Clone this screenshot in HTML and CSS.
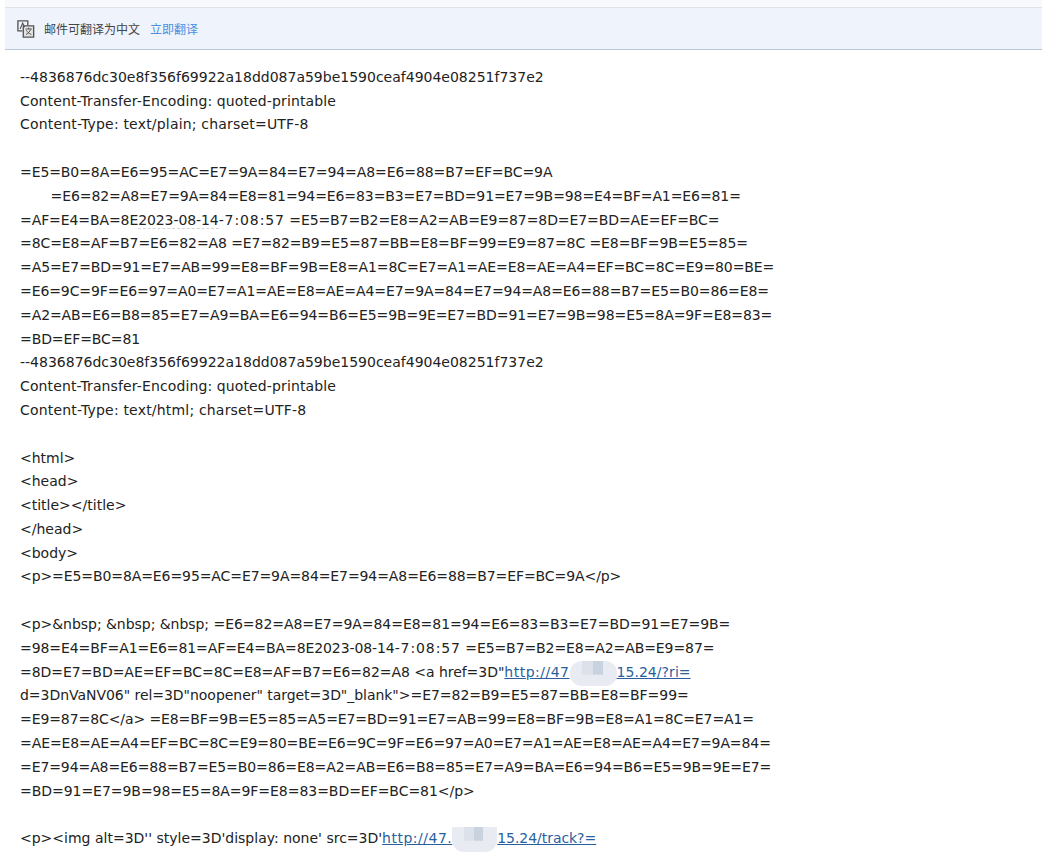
FILE: index.html
```html
<!DOCTYPE html>
<html lang="zh">
<head>
<meta charset="utf-8">
<title>邮件</title>
<link rel="stylesheet" href="styles.css">
</head>
<body>
<div class="topstrip"></div>
<div class="banner">
<svg class="tr-icon" width="18" height="18" viewBox="0 0 20 20" fill="none" stroke="#555" stroke-width="1.5"><path d="M12 6V1H1v11h5"/><path d="M7 6.500h11.500V19H7z" fill="#e4e4e4"/><path d="M3.500 10 6.300 3.500 8.500 8" stroke-width="1.200"/><path d="M9.500 10h7M13 8.500V10M15 10.500c-.7 2.500-2.500 4.500-5 5.500M10.500 11.500c1 2 3 4 5.500 4.500" stroke-width="1.100"/></svg>
<span class="tr-text">邮件可翻译为中文</span>
<span class="tr-link">立即翻译</span>
</div>
<div class="mail">
<div class="ln">--4836876dc30e8f356f69922a18dd087a59be1590ceaf4904e08251f737e2</div>
<div class="ln hdr">Content-Transfer-Encoding: quoted-printable</div>
<div class="ln hdr2">Content-Type: text/plain; charset=UTF-8</div>
<div class="ln">&nbsp;</div>
<div class="ln qp">=E5=B0=8A=E6=95=AC=E7=9A=84=E7=94=A8=E6=88=B7=EF=BC=9A</div>
<div class="ln qp">&nbsp; &nbsp; &nbsp; &nbsp;=E6=82=A8=E7=9A=84=E8=81=94=E6=83=B3=E7=BD=91=E7=9B=98=E4=BF=A1=E6=81=</div>
<div class="ln qp">=AF=E4=BA=8E<span class="date">2023-08-14</span><span class="time">-7:08:57</span> =E5=B7=B2=E8=A2=AB=E9=87=8D=E7=BD=AE=EF=BC=</div>
<div class="ln qp">=8C=E8=AF=B7=E6=82=A8 =E7=82=B9=E5=87=BB=E8=BF=99=E9=87=8C =E8=BF=9B=E5=85=</div>
<div class="ln qp">=A5=E7=BD=91=E7=AB=99=E8=BF=9B=E8=A1=8C=E7=A1=AE=E8=AE=A4=EF=BC=8C=E9=80=BE=</div>
<div class="ln qp">=E6=9C=9F=E6=97=A0=E7=A1=AE=E8=AE=A4=E7=9A=84=E7=94=A8=E6=88=B7=E5=B0=86=E8=</div>
<div class="ln qp">=A2=AB=E6=B8=85=E7=A9=BA=E6=94=B6=E5=9B=9E=E7=BD=91=E7=9B=98=E5=8A=9F=E8=83=</div>
<div class="ln qp">=BD=EF=BC=81</div>
<div class="ln">--4836876dc30e8f356f69922a18dd087a59be1590ceaf4904e08251f737e2</div>
<div class="ln hdr">Content-Transfer-Encoding: quoted-printable</div>
<div class="ln hdr2">Content-Type: text/html; charset=UTF-8</div>
<div class="ln">&nbsp;</div>
<div class="ln">&lt;html&gt;</div>
<div class="ln">&lt;head&gt;</div>
<div class="ln">&lt;title&gt;&lt;/title&gt;</div>
<div class="ln">&lt;/head&gt;</div>
<div class="ln">&lt;body&gt;</div>
<div class="ln qp">&lt;p&gt;=E5=B0=8A=E6=95=AC=E7=9A=84=E7=94=A8=E6=88=B7=EF=BC=9A&lt;/p&gt;</div>
<div class="ln">&nbsp;</div>
<div class="ln qp2">&lt;p&gt;&amp;nbsp; &amp;nbsp; &amp;nbsp; =E6=82=A8=E7=9A=84=E8=81=94=E6=83=B3=E7=BD=91=E7=9B=</div>
<div class="ln qp">=98=E4=BF=A1=E6=81=AF=E4=BA=8E2023-08-14<span class="time">-7:08:57</span> =E5=B7=B2=E8=A2=AB=E9=87=</div>
<div class="ln qp2">=8D=E7=BD=AE=EF=BC=8C=E8=AF=B7=E6=82=A8 &lt;a href=3D"<a class="lnk"><span class="wide">http://47</span><span class="blur b1"></span><span class="norm">15.24/?ri=</span></a></div>
<div class="ln qp2">d=3DnVaNV06" rel=3D"noopener" target=3D"_blank"&gt;=E7=82=B9=E5=87=BB=E8=BF=99=</div>
<div class="ln qp">=E9=87=8C&lt;/a&gt; =E8=BF=9B=E5=85=A5=E7=BD=91=E7=AB=99=E8=BF=9B=E8=A1=8C=E7=A1=</div>
<div class="ln qp">=AE=E8=AE=A4=EF=BC=8C=E9=80=BE=E6=9C=9F=E6=97=A0=E7=A1=AE=E8=AE=A4=E7=9A=84=</div>
<div class="ln qp">=E7=94=A8=E6=88=B7=E5=B0=86=E8=A2=AB=E6=B8=85=E7=A9=BA=E6=94=B6=E5=9B=9E=E7=</div>
<div class="ln qp2">=BD=91=E7=9B=98=E5=8A=9F=E8=83=BD=EF=BC=81&lt;/p&gt;</div>
<div class="ln">&nbsp;</div>
<div class="ln">&lt;p&gt;&lt;img alt=3D'' style=3D'display: none' src=3D'<a class="lnk"><span class="wide">http://47.</span><span class="blur b2"></span><span class="tight">15.24/track?=</span></a></div>
</div>
</body>
</html>
```
FILE: styles.css
```css
html, body { margin: 0; padding: 0; background: #fff; height: 853px; overflow: hidden; }
body { font-family: "DejaVu Sans", Verdana, sans-serif; }
.topstrip { height: 7px; margin-left: 5px; background: #f7f9fc; border-bottom: 1px solid #dfe3e8; }
.banner { margin-left: 5px; height: 41px; background: #eff3fb; border-bottom: 1px solid #b9c6da; display: flex; align-items: center; font-family: "Noto Sans CJK SC", sans-serif; font-size: 12px; }
.tr-icon { margin-left: 12px; }
.tr-text { margin-left: 9px; color: #444; }
.tr-link { margin-left: 10px; color: #4a90e2; }
.mail { padding: 15.75px 0 0 20px; font-size: 14px; line-height: 23.8px; color: #222; white-space: nowrap; }
.ln { height: 23.8px; }
.hdr { letter-spacing: 0.12px; }
.hdr2 { letter-spacing: 0.19px; }
.qp { letter-spacing: -0.09px; }
.qp2 { letter-spacing: -0.04px; }
.date { border-bottom: 1px dashed #d4d4d4; }
.time { letter-spacing: 0.9px; }
.lnk { color: #2a5f9e; text-decoration: underline; }
.wide { letter-spacing: 0.5px; }
.norm { letter-spacing: 0.05px; }
.tight { letter-spacing: -0.05px; }
.blur { display: inline-block; vertical-align: top; height: 25px; border-radius: 12px; background-color: #e8ebf2; background-image: linear-gradient(90deg, transparent 0 26%, #dde2ea 26% 48%, #c9d3e0 48% 70%, transparent 70%); background-size: 100% 55%; background-repeat: no-repeat; }
.b1 { width: 47px; }
.b2 { width: 45px; border-radius: 0 0 12px 12px; }
```
